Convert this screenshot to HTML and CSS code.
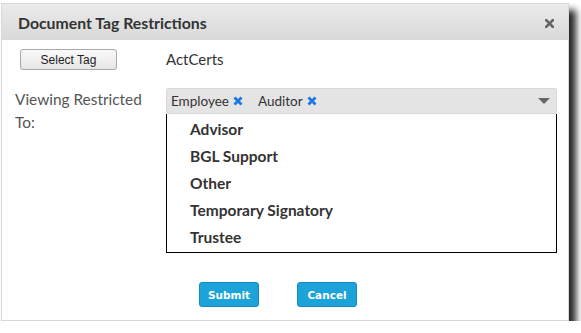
FILE: index.html
```html
<!DOCTYPE html>
<html lang="en">
<head>
    <meta charset="UTF-8">
    <meta name="viewport" content="width=device-width, initial-scale=1.0">
    <title>Document Tag Restrictions</title>
    <link rel="stylesheet" href="styles.css">
</head>
<body>

<div class="dialog">
    <div class="dialog-header">
        <h2>Document Tag Restrictions</h2>
        <span class="close">
            <svg width="9" height="9" viewBox="0 0 9 9"><path d="M1 1 L8 8 M8 1 L1 8" stroke="#666" stroke-width="2.6" stroke-linecap="square"/></svg>
        </span>
    </div>

    <div class="dialog-body">
        <div class="form-row">
            <div class="form-label">
                <button class="btn-select">Select Tag</button>
            </div>
            <div class="form-value tag-name">ActCerts</div>
        </div>

        <div class="form-row restrict-row">
            <label class="form-label restrict-label">Viewing Restricted To:</label>
            <div class="form-value">
                <div class="chosen">
                    <div class="chosen-tags">
                        <span class="chosen-tag">Employee
                            <svg width="10" height="10" viewBox="0 0 10 10"><path d="M1.5 1.5 L8.5 8.5 M8.5 1.5 L1.5 8.5" stroke="#1c78e0" stroke-width="2.8"/></svg>
                        </span>
                        <span class="chosen-tag">Auditor
                            <svg width="10" height="10" viewBox="0 0 10 10"><path d="M1.5 1.5 L8.5 8.5 M8.5 1.5 L1.5 8.5" stroke="#1c78e0" stroke-width="2.8"/></svg>
                        </span>
                    </div>
                    <span class="chosen-arrow"></span>
                </div>
                <ul class="chosen-list">
                    <li>Advisor</li>
                    <li>BGL Support</li>
                    <li>Other</li>
                    <li>Temporary Signatory</li>
                    <li>Trustee</li>
                </ul>
            </div>
        </div>

        <div class="dialog-footer">
            <button class="btn-primary">Submit</button>
            <button class="btn-primary">Cancel</button>
        </div>
    </div>
</div>

</body>
</html>
```

FILE: styles.css
```css
/* Basic styling */
body {
    margin: 0;
    background-color: #fff;
    font-family: Lato, "Open Sans", sans-serif;
    color: #333;
}
.dialog {
    width: 566px;
    margin: 3px 0 0 1px;
    border: 1px solid #d9d9d9;
    background-color: #fff;
    box-shadow: 7px 7px 7px rgba(0, 0, 0, 0.85);
}
.dialog-header {
    height: 36px;
    padding: 0 14px 0 16px;
    display: flex;
    align-items: center;
    justify-content: space-between;
    background: linear-gradient(#ebebeb, #d9d9d9);
}
.dialog-header h2 {
    margin: 0;
    font-size: 15.8px;
    font-weight: bold;
    color: #333;
}
.close {
    display: flex;
    margin-top: 3px;
}
.dialog-body {
    padding: 9px 0 13px 0;
}
.form-row {
    display: grid;
    grid-template-columns: 164px 391px;
}
.form-label {
    padding-left: 13px;
}
.btn-select {
    display: block;
    width: 97px;
    height: 21px;
    margin-left: 5px;
    padding: 0;
    font-family: "Liberation Sans", Arial, sans-serif;
    font-size: 12px;
    color: #222;
    background: linear-gradient(#fafafa, #e6e6e6);
    border: 1px solid #a8a8a8;
    border-radius: 3px;
}
.tag-name {
    font-size: 15px;
    line-height: 18px;
    padding-top: 1px;
    color: #333;
}
.restrict-row {
    margin-top: 18px;
}
.restrict-label {
    font-size: 15.4px;
    line-height: 23px;
    color: #555;
    padding-right: 18px;
}
.chosen {
    height: 24px;
    display: flex;
    align-items: center;
    justify-content: space-between;
    padding: 0 5px 0 4px;
    background-color: #e4e4e4;
    border: 1px solid #d8d8d8;
    border-radius: 2px;
}
.chosen-tags {
    display: flex;
    gap: 15px;
}
.chosen-tag {
    display: flex;
    align-items: center;
    gap: 4px;
    font-size: 13.5px;
    color: #333;
}
.chosen-arrow {
    width: 0;
    height: 0;
    margin-right: 1px;
    border-left: 6px solid transparent;
    border-right: 6px solid transparent;
    border-top: 6px solid #666;
}
.chosen-list {
    list-style: none;
    margin: 0;
    padding: 2px 0 1px 23px;
    border: 1px solid #000;
    border-top: none;
}
.chosen-list li {
    font-size: 15.5px;
    font-weight: bold;
    line-height: 27px;
    color: #333;
}
.dialog-footer {
    display: flex;
    gap: 38px;
    margin-top: 29px;
    padding-left: 197px;
}
.btn-primary {
    width: 60px;
    height: 25px;
    padding: 0;
    font-family: Verdana, "DejaVu Sans", sans-serif;
    font-size: 10.5px;
    font-weight: bold;
    color: #fff;
    background-color: #1ba3da;
    border: 1px solid #1589c2;
    border-radius: 3px;
}
```
